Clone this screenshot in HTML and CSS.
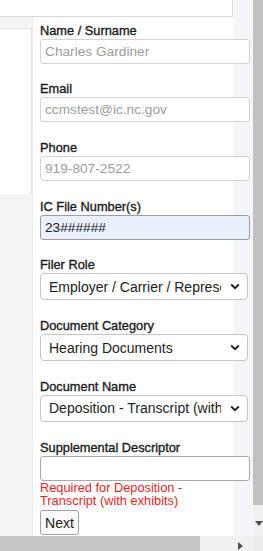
FILE: index.html
```html
<!DOCTYPE html>
<html lang="en">
<head>
  <meta charset="UTF-8">
  <meta name="viewport" content="width=device-width, initial-scale=1.0">
  <title>File a Document</title>
  <link rel="stylesheet" href="styles.css">
</head>
<body>
  <!-- browser window -->
  <div class="window">
    <!-- visible part of the page -->
    <div class="viewport">
      <div class="top-strip"></div>
      <div class="page">
        <!-- left panel -->
        <aside class="sidebar">
          <div class="sidebar-card"></div>
        </aside>
        <!-- form column -->
        <main class="main">
          <form class="filing-form">
            <div class="field">
              <label class="field-label">Name / Surname</label>
              <input class="text-input is-readonly" type="text" value="Charles Gardiner" readonly>
            </div>
            <div class="field">
              <label class="field-label">Email</label>
              <input class="text-input is-readonly" type="text" value="ccmstest@ic.nc.gov" readonly>
            </div>
            <div class="field">
              <label class="field-label">Phone</label>
              <input class="text-input is-readonly" type="text" value="919-807-2522" readonly>
            </div>
            <div class="field">
              <label class="field-label">IC File Number(s)</label>
              <input class="text-input is-filled" type="text" value="23######">
            </div>
            <div class="field">
              <label class="field-label">Filer Role</label>
              <div class="select-wrap">
                <select class="select-input">
                  <option>Employer / Carrier / Representative</option>
                </select>
                <svg class="chevron" width="10" height="7" viewBox="0 0 10 7"><polyline points="1.2,1.5 5,5.2 8.8,1.5" fill="none" stroke="#222" stroke-width="1.9"/></svg>
              </div>
            </div>
            <div class="field">
              <label class="field-label">Document Category</label>
              <div class="select-wrap">
                <select class="select-input">
                  <option>Hearing Documents</option>
                </select>
                <svg class="chevron" width="10" height="7" viewBox="0 0 10 7"><polyline points="1.2,1.5 5,5.2 8.8,1.5" fill="none" stroke="#222" stroke-width="1.9"/></svg>
              </div>
            </div>
            <div class="field">
              <label class="field-label">Document Name</label>
              <div class="select-wrap">
                <select class="select-input">
                  <option>Deposition - Transcript (with exhibits)</option>
                </select>
                <svg class="chevron" width="10" height="7" viewBox="0 0 10 7"><polyline points="1.2,1.5 5,5.2 8.8,1.5" fill="none" stroke="#222" stroke-width="1.9"/></svg>
              </div>
            </div>
            <div class="field field-last">
              <label class="field-label">Supplemental Descriptor</label>
              <input class="text-input is-required" type="text">
              <p class="field-error">Required for Deposition - Transcript (with exhibits)</p>
              <button class="next-btn" type="button">Next</button>
            </div>
          </form>
        </main>
      </div>
    </div>
    <!-- scrollbars -->
    <div class="vscroll">
      <div class="vthumb"></div>
      <span class="arrow-down"></span>
    </div>
    <div class="hscroll">
      <div class="hthumb"></div>
      <span class="arrow-right"></span>
    </div>
    <div class="corner"></div>
  </div>
</body>
</html>
```

FILE: styles.css
```css
/* base */
html, body {
  margin: 0;
  padding: 0;
}
body {
  font-family: "Liberation Sans", Arial, sans-serif;
  color: #222;
}
.window {
  width: 263px;
  height: 551px;
  display: grid;
  grid-template-columns: 253px 10px;
  grid-template-rows: 536px 15px;
  overflow: hidden;
}
/* page area */
.viewport {
  background-color: #f4f5f9;
  display: flex;
  flex-direction: column;
  overflow: hidden;
}
.top-strip {
  flex: none;
  width: 233px;
  height: 17px;
  box-sizing: border-box;
  background-color: #fff;
  border-bottom: 1px solid #d9d9d9;
  border-right: 1px solid #d9d9d9;
}
.page {
  flex: 1;
  display: flex;
}
/* left panel */
.sidebar {
  flex: none;
  width: 32px;
  padding-top: 11px;
  background-color: #f4f4f4;
}
.sidebar-card {
  width: 32px;
  height: 166px;
  box-sizing: border-box;
  background-color: #fff;
  border-top: 1px solid #e2e2e2;
  border-right: 1px solid #e2e2e2;
}
/* form column */
.main {
  flex: none;
  width: 201px;
  box-sizing: border-box;
  padding: 6.7px 0 0 7px;
  background-color: #fff;
  border-left: 1px solid #ededed;
}
.field {
  display: flex;
  flex-direction: column;
  align-items: flex-start;
  margin-bottom: 18.7px;
}
.field-label {
  font-size: 12.8px;
  line-height: 14px;
  font-weight: 400;
  color: #1a1a1a;
  -webkit-text-stroke: 0.35px #1a1a1a;
  margin-bottom: 1px;
}
.text-input {
  width: 210px;
  height: 25px;
  box-sizing: border-box;
  margin: 0;
  padding: 0 4px;
  border: 1px solid #d3d3d3;
  border-radius: 3px;
  background-color: #fff;
  font-family: "Liberation Sans", Arial, sans-serif;
  font-size: 13.7px;
  color: #222;
  outline: none;
}
.text-input.is-readonly {
  color: #9d9d9d;
}
.text-input.is-filled {
  background-color: #e8f0fe;
  border-color: #9c9c9c;
}
.text-input.is-required {
  border-color: #a9a9a9;
}
/* selects */
.select-wrap {
  display: grid;
  align-items: center;
}
.select-wrap > * {
  grid-area: 1 / 1;
}
.select-input {
  -webkit-appearance: none;
  appearance: none;
  width: 208px;
  height: 27px;
  box-sizing: border-box;
  margin: 0;
  padding: 0 26px 0 8px;
  border: 1px solid #c6c6c6;
  border-radius: 4px;
  background-color: #fff;
  font-family: "Liberation Sans", Arial, sans-serif;
  font-size: 14px;
  color: #222;
}
.chevron {
  justify-self: end;
  margin-right: 8px;
}
/* error + button */
.field-error {
  margin: 0;
  width: 192px;
  font-size: 12.8px;
  line-height: 13.5px;
  color: #f21c1c;
}
.next-btn {
  margin-top: 2.7px;
  width: 39px;
  height: 25px;
  padding: 0;
  border: 1px solid #a3a3a3;
  border-radius: 3px;
  background-color: #fbfbfb;
  font-family: "Liberation Sans", Arial, sans-serif;
  font-size: 14px;
  color: #222;
}
/* scrollbars */
.vscroll {
  background-color: #f1f1f1;
  display: flex;
  flex-direction: column;
  align-items: center;
}
.vthumb {
  width: 100%;
  height: 505px;
  background-color: #c1c1c1;
}
.arrow-down {
  margin-top: 16px;
  margin-left: 2px;
  width: 0;
  height: 0;
  border-left: 4px solid transparent;
  border-right: 4px solid transparent;
  border-top: 5px solid #505050;
}
.hscroll {
  background-color: #f1f1f1;
  display: flex;
  align-items: flex-start;
}
.hthumb {
  width: 200px;
  height: 100%;
  background-color: #c6c6c6;
}
.arrow-right {
  margin: 6px 10px 0 auto;
  width: 0;
  height: 0;
  border-top: 4px solid transparent;
  border-bottom: 4px solid transparent;
  border-left: 5px solid #505050;
}
.corner {
  background-color: #ececec;
}
```
